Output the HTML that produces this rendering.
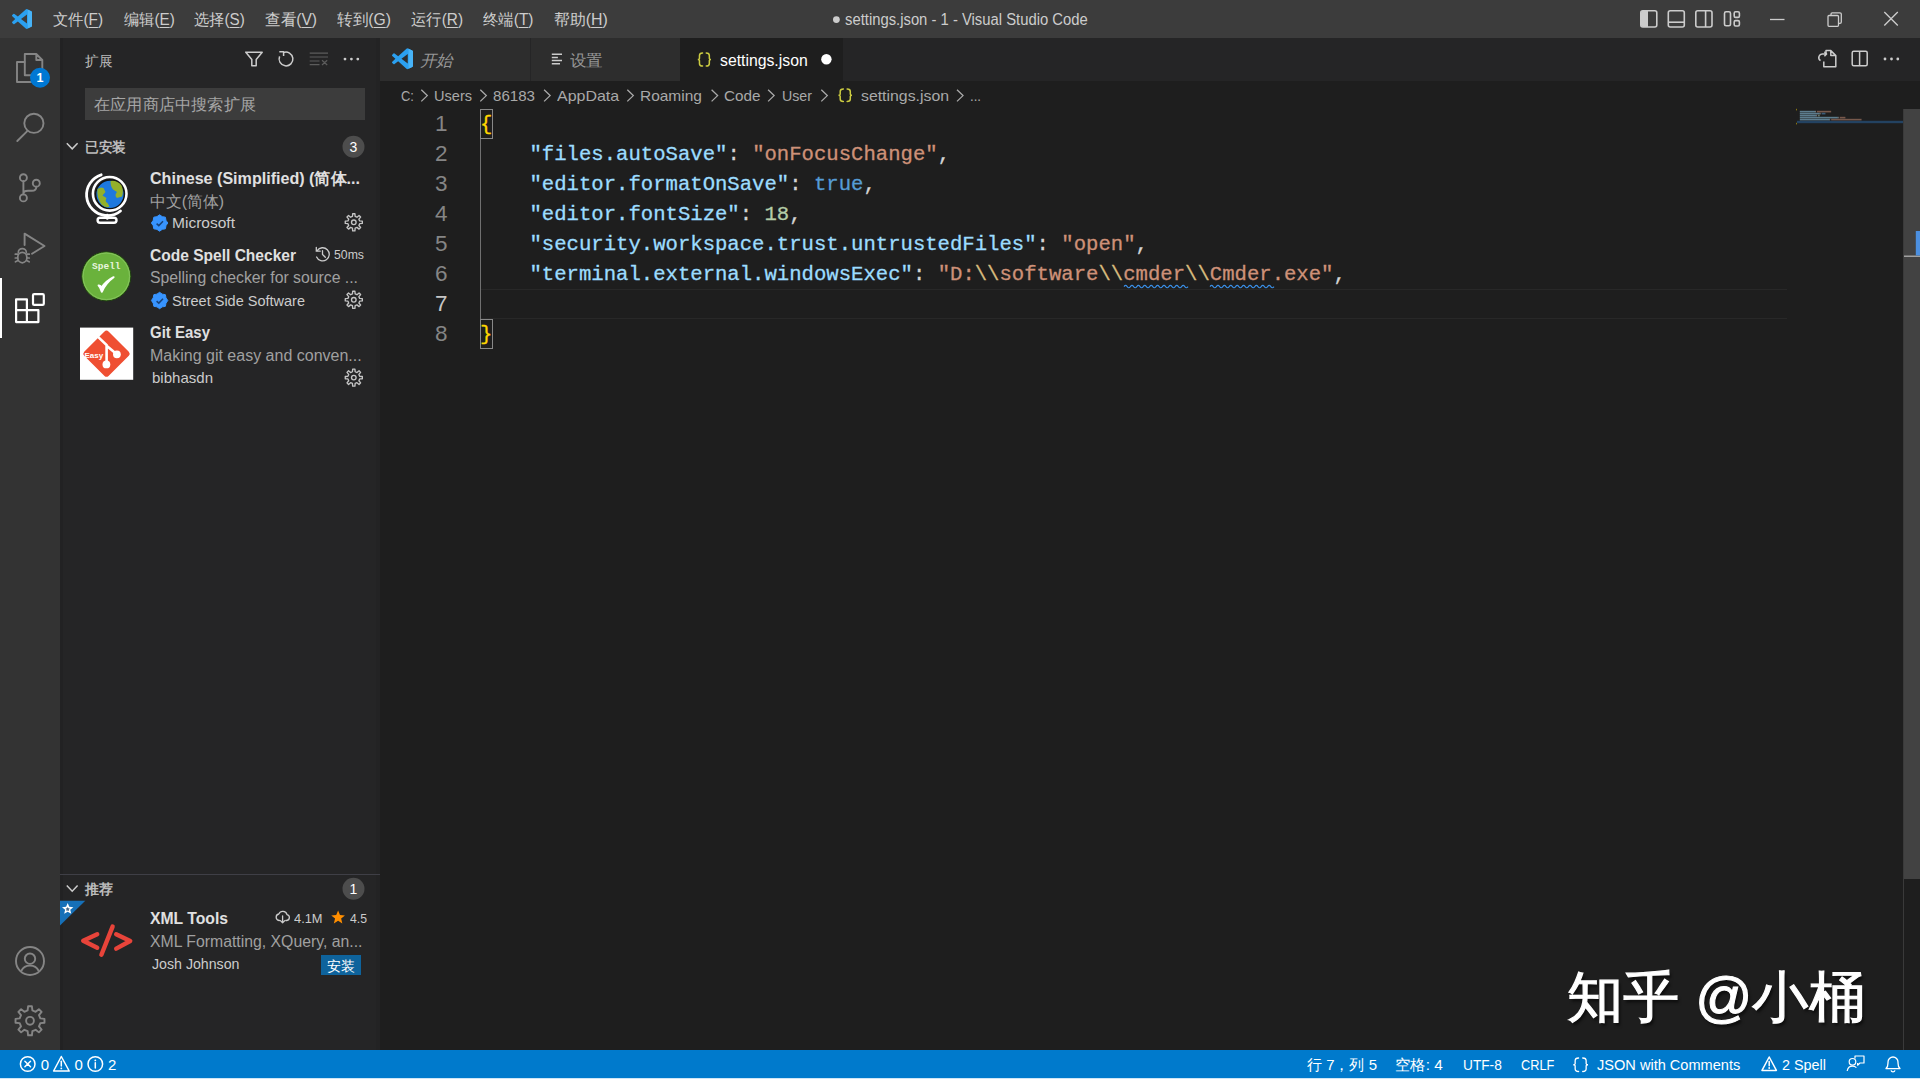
<!DOCTYPE html>
<html><head><meta charset="utf-8">
<style>
*{margin:0;padding:0;box-sizing:border-box}
html,body{width:1920px;height:1079px;overflow:hidden;background:#1e1e1e;font-family:"Liberation Sans",sans-serif;color:#ccc;position:relative}
.a{position:absolute;white-space:pre}
.f{transform-origin:0 0}
u{text-decoration:underline;text-underline-offset:2px;text-decoration-thickness:1px}
.code{font-family:"Liberation Mono",monospace;font-size:20.625px;line-height:20.625px;color:#d4d4d4;-webkit-text-stroke:0.3px}
svg.ic{position:absolute;left:0;top:0;width:1920px;height:1079px}
</style></head><body>
<div class="a" style="left:0px;top:0px;width:1920px;height:38px;background:#3c3c3c;"></div>
<div class="a" style="left:0px;top:38px;width:60px;height:1012px;background:#333333;"></div>
<div class="a" style="left:60px;top:38px;width:320px;height:1012px;background:#252526;"></div>
<div class="a" style="left:60px;top:38px;width:3px;height:1012px;background:#222223;"></div>
<div class="a" style="left:376px;top:38px;width:4px;height:1012px;background:#232324;"></div>
<div class="a" style="left:380px;top:38px;width:1540px;height:43px;background:#252526;"></div>
<div class="a" style="left:380px;top:38px;width:150px;height:43px;background:#2d2d2d;"></div>
<div class="a" style="left:531px;top:38px;width:149px;height:43px;background:#2d2d2d;"></div>
<div class="a" style="left:680px;top:38px;width:163px;height:43px;background:#1e1e1e;"></div>
<div class="a" style="left:380px;top:81px;width:1540px;height:969px;background:#1e1e1e;"></div>
<div class="a" style="left:0px;top:1050px;width:1920px;height:28px;background:#007acc;"></div>
<div class="a" style="left:0px;top:1078px;width:1920px;height:1px;background:#cfe6f6;"></div>
<div class="a f" style="transform:scaleX(0.9535);left:53px;top:12.46px;font-size:16px;line-height:16px;color:#cccccc;font-weight:400;">文件(<u>F</u>)</div>
<div class="a f" style="transform:scaleX(0.9526);left:123.6px;top:12.46px;font-size:16px;line-height:16px;color:#cccccc;font-weight:400;">编辑(<u>E</u>)</div>
<div class="a f" style="transform:scaleX(0.9507);left:194px;top:12.46px;font-size:16px;line-height:16px;color:#cccccc;font-weight:400;">选择(<u>S</u>)</div>
<div class="a f" style="transform:scaleX(0.9751);left:265px;top:12.46px;font-size:16px;line-height:16px;color:#cccccc;font-weight:400;">查看(<u>V</u>)</div>
<div class="a f" style="transform:scaleX(0.9799);left:337px;top:12.46px;font-size:16px;line-height:16px;color:#cccccc;font-weight:400;">转到(<u>G</u>)</div>
<div class="a f" style="transform:scaleX(0.9591);left:411px;top:12.46px;font-size:16px;line-height:16px;color:#cccccc;font-weight:400;">运行(<u>R</u>)</div>
<div class="a f" style="transform:scaleX(0.9631);left:482.5px;top:12.46px;font-size:16px;line-height:16px;color:#cccccc;font-weight:400;">终端(<u>T</u>)</div>
<div class="a f" style="transform:scaleX(0.9941);left:553.6px;top:12.46px;font-size:16px;line-height:16px;color:#cccccc;font-weight:400;">帮助(<u>H</u>)</div>
<div class="a f" style="transform:scaleX(0.9261);left:844.8px;top:12.46px;font-size:16px;line-height:16px;color:#cccccc;font-weight:400;">settings.json - 1 - Visual Studio Code</div>
<div class="a f" style="transform:scaleX(0.9821);left:85px;top:53.65px;font-size:14px;line-height:14px;color:#bbbbbb;font-weight:400;">扩展</div>
<div class="a" style="left:85px;top:88px;width:280px;height:32px;background:#3c3c3c;"></div>
<div class="a f" style="transform:scaleX(1.0125);left:94px;top:97.46px;font-size:16px;line-height:16px;color:#a6a6a6;font-weight:400;">在应用商店中搜索扩展</div>
<div class="a f" style="transform:scaleX(0.9762);left:85px;top:139.65px;font-size:14px;line-height:14px;color:#bbbbbb;font-weight:700;">已安装</div>
<div class="a f" style="transform:scaleX(1.0052);left:150px;top:170.96px;font-size:16px;line-height:16px;color:#e0e0e0;font-weight:700;">Chinese (Simplified) (简体...</div>
<div class="a f" style="transform:scaleX(0.9912);left:150px;top:193.96px;font-size:16px;line-height:16px;color:#a0a0a0;font-weight:400;">中文(简体)</div>
<div class="a f" style="transform:scaleX(1.0354);left:172px;top:215.10px;font-size:15px;line-height:15px;color:#cccccc;font-weight:400;">Microsoft</div>
<div class="a f" style="transform:scaleX(0.9715);left:150px;top:247.96px;font-size:16px;line-height:16px;color:#e0e0e0;font-weight:700;">Code Spell Checker</div>
<div class="a f" style="transform:scaleX(0.9435);left:333.5px;top:248.20px;font-size:13px;line-height:13px;color:#cccccc;font-weight:400;">50ms</div>
<div class="a f" style="transform:scaleX(0.9869);left:150px;top:270.46px;font-size:16px;line-height:16px;color:#a0a0a0;font-weight:400;">Spelling checker for source ...</div>
<div class="a f" style="transform:scaleX(0.9667);left:172px;top:293.30px;font-size:15px;line-height:15px;color:#cccccc;font-weight:400;">Street Side Software</div>
<div class="a f" style="transform:scaleX(0.9370);left:150px;top:325.46px;font-size:16px;line-height:16px;color:#e0e0e0;font-weight:700;">Git Easy</div>
<div class="a f" style="transform:scaleX(1.0001);left:150px;top:347.96px;font-size:16px;line-height:16px;color:#a0a0a0;font-weight:400;">Making git easy and conven...</div>
<div class="a f" style="transform:scaleX(1.0018);left:151.5px;top:370.30px;font-size:15px;line-height:15px;color:#cccccc;font-weight:400;">bibhasdn</div>
<div class="a" style="left:60px;top:874px;width:320px;height:1px;background:#3f3f46;"></div>
<div class="a f" style="transform:scaleX(1.0000);left:85px;top:881.65px;font-size:14px;line-height:14px;color:#bbbbbb;font-weight:700;">推荐</div>
<div class="a f" style="transform:scaleX(0.9823);left:150px;top:911.46px;font-size:16px;line-height:16px;color:#e0e0e0;font-weight:700;">XML Tools</div>
<div class="a f" style="transform:scaleX(0.9859);left:294px;top:911.70px;font-size:13px;line-height:13px;color:#cccccc;font-weight:400;">4.1M</div>
<div class="a f" style="transform:scaleX(0.9404);left:349.5px;top:911.70px;font-size:13px;line-height:13px;color:#cccccc;font-weight:400;">4.5</div>
<div class="a f" style="transform:scaleX(0.9875);left:150px;top:933.96px;font-size:16px;line-height:16px;color:#a0a0a0;font-weight:400;">XML Formatting, XQuery, an...</div>
<div class="a f" style="transform:scaleX(0.9451);left:151.5px;top:956.30px;font-size:15px;line-height:15px;color:#cccccc;font-weight:400;">Josh Johnson</div>
<div class="a" style="left:321px;top:955px;width:40px;height:20px;background:#0e639c;"></div>
<div class="a f" style="transform:scaleX(1.0000);left:327px;top:959.15px;font-size:14px;line-height:14px;color:#ffffff;font-weight:400;">安装</div>
<div class="a f" style="transform:scaleX(1.0312);left:420px;top:52.96px;font-size:16px;line-height:16px;color:#969696;font-weight:400;font-style:italic;">开始</div>
<div class="a f" style="transform:scaleX(1.0312);left:570px;top:52.96px;font-size:16px;line-height:16px;color:#969696;font-weight:400;">设置</div>
<div class="a f" style="transform:scaleX(0.9861);left:720.3px;top:52.96px;font-size:16px;line-height:16px;color:#ffffff;font-weight:400;">settings.json</div>
<div class="a f" style="transform:scaleX(0.8600);left:400.5px;top:87.90px;font-size:15px;line-height:15px;color:#a9a9a9;font-weight:400;">C:</div>
<div class="a f" style="transform:scaleX(0.9701);left:434.4px;top:87.90px;font-size:15px;line-height:15px;color:#a9a9a9;font-weight:400;">Users</div>
<div class="a f" style="transform:scaleX(1.0067);left:493.4px;top:87.90px;font-size:15px;line-height:15px;color:#a9a9a9;font-weight:400;">86183</div>
<div class="a f" style="transform:scaleX(1.0655);left:557.2px;top:87.90px;font-size:15px;line-height:15px;color:#a9a9a9;font-weight:400;">AppData</div>
<div class="a f" style="transform:scaleX(1.0311);left:640.4px;top:87.90px;font-size:15px;line-height:15px;color:#a9a9a9;font-weight:400;">Roaming</div>
<div class="a f" style="transform:scaleX(1.0179);left:723.9px;top:87.90px;font-size:15px;line-height:15px;color:#a9a9a9;font-weight:400;">Code</div>
<div class="a f" style="transform:scaleX(0.9472);left:782px;top:87.90px;font-size:15px;line-height:15px;color:#a9a9a9;font-weight:400;">User</div>
<div class="a f" style="transform:scaleX(1.0553);left:861px;top:87.90px;font-size:15px;line-height:15px;color:#a9a9a9;font-weight:400;">settings.json</div>
<div class="a f" style="transform:scaleX(0.8789);left:970px;top:87.90px;font-size:15px;line-height:15px;color:#a9a9a9;font-weight:400;">...</div>
<div class="a" style="left:480px;top:289px;width:1307px;height:1px;background:#282828;"></div>
<div class="a" style="left:480px;top:318px;width:1307px;height:1px;background:#282828;"></div>
<div class="a code" style="left:480px;top:114.90px"><span style="color:#ffd700">{</span></div>
<div class="a" style="left:435px;top:113.46px;font-size:22.5px;line-height:22.5px;color:#858585;font-weight:400;font-family:"Liberation Mono",monospace;width:13px;text-align:right;">1</div>
<div class="a code" style="left:480px;top:144.90px">    <span style="color:#9cdcfe">"files.autoSave"</span><span style="color:#d4d4d4">: </span><span style="color:#ce9178">"onFocusChange"</span><span style="color:#d4d4d4">,</span></div>
<div class="a" style="left:435px;top:143.46px;font-size:22.5px;line-height:22.5px;color:#858585;font-weight:400;font-family:"Liberation Mono",monospace;width:13px;text-align:right;">2</div>
<div class="a code" style="left:480px;top:174.90px">    <span style="color:#9cdcfe">"editor.formatOnSave"</span><span style="color:#d4d4d4">: </span><span style="color:#569cd6">true</span><span style="color:#d4d4d4">,</span></div>
<div class="a" style="left:435px;top:173.46px;font-size:22.5px;line-height:22.5px;color:#858585;font-weight:400;font-family:"Liberation Mono",monospace;width:13px;text-align:right;">3</div>
<div class="a code" style="left:480px;top:204.90px">    <span style="color:#9cdcfe">"editor.fontSize"</span><span style="color:#d4d4d4">: </span><span style="color:#b5cea8">18</span><span style="color:#d4d4d4">,</span></div>
<div class="a" style="left:435px;top:203.46px;font-size:22.5px;line-height:22.5px;color:#858585;font-weight:400;font-family:"Liberation Mono",monospace;width:13px;text-align:right;">4</div>
<div class="a code" style="left:480px;top:234.90px">    <span style="color:#9cdcfe">"security.workspace.trust.untrustedFiles"</span><span style="color:#d4d4d4">: </span><span style="color:#ce9178">"open"</span><span style="color:#d4d4d4">,</span></div>
<div class="a" style="left:435px;top:233.46px;font-size:22.5px;line-height:22.5px;color:#858585;font-weight:400;font-family:"Liberation Mono",monospace;width:13px;text-align:right;">5</div>
<div class="a code" style="left:480px;top:264.90px">    <span style="color:#9cdcfe">"terminal.external.windowsExec"</span><span style="color:#d4d4d4">: </span><span style="color:#ce9178">"D:</span><span style="color:#d7ba7d">\\</span><span style="color:#ce9178">software</span><span style="color:#d7ba7d">\\</span><span style="color:#ce9178">cmder</span><span style="color:#d7ba7d">\\</span><span style="color:#ce9178">Cmder.exe"</span><span style="color:#d4d4d4">,</span></div>
<div class="a" style="left:435px;top:263.46px;font-size:22.5px;line-height:22.5px;color:#858585;font-weight:400;font-family:"Liberation Mono",monospace;width:13px;text-align:right;">6</div>
<div class="a code" style="left:480px;top:294.90px"></div>
<div class="a" style="left:435px;top:293.46px;font-size:22.5px;line-height:22.5px;color:#c6c6c6;font-weight:400;font-family:"Liberation Mono",monospace;width:13px;text-align:right;">7</div>
<div class="a code" style="left:480px;top:324.90px"><span style="color:#ffd700">}</span></div>
<div class="a" style="left:435px;top:323.46px;font-size:22.5px;line-height:22.5px;color:#858585;font-weight:400;font-family:"Liberation Mono",monospace;width:13px;text-align:right;">8</div>
<div class="a" style="left:40.8px;top:1057.10px;font-size:15px;line-height:15px;color:#ffffff;font-weight:400;">0</div>
<div class="a" style="left:74.6px;top:1057.10px;font-size:15px;line-height:15px;color:#ffffff;font-weight:400;">0</div>
<div class="a" style="left:108px;top:1057.10px;font-size:15px;line-height:15px;color:#ffffff;font-weight:400;">2</div>
<div class="a f" style="transform:scaleX(0.9996);left:1306.7px;top:1057.10px;font-size:15px;line-height:15px;color:#ffffff;font-weight:400;">行 7，列 5</div>
<div class="a f" style="transform:scaleX(1.0217);left:1395px;top:1057.10px;font-size:15px;line-height:15px;color:#ffffff;font-weight:400;">空格: 4</div>
<div class="a f" style="transform:scaleX(0.9129);left:1462.9px;top:1057.10px;font-size:15px;line-height:15px;color:#ffffff;font-weight:400;">UTF-8</div>
<div class="a f" style="transform:scaleX(0.8501);left:1520.7px;top:1057.10px;font-size:15px;line-height:15px;color:#ffffff;font-weight:400;">CRLF</div>
<div class="a f" style="transform:scaleX(0.9712);left:1596.7px;top:1057.10px;font-size:15px;line-height:15px;color:#ffffff;font-weight:400;">JSON with Comments</div>
<div class="a f" style="transform:scaleX(0.9591);left:1781.7px;top:1057.10px;font-size:15px;line-height:15px;color:#ffffff;font-weight:400;">2 Spell</div>
<div class="a f" style="transform:scaleX(1.0236);left:1567px;top:970.44px;font-size:55px;line-height:55px;color:#ffffff;font-weight:500;text-shadow:2px 3px 3px rgba(0,0,0,.6);-webkit-text-stroke:1.1px #fff;">知乎 @小桶</div>
<svg class="ic" viewBox="0 0 1920 1079">
<g transform="translate(12,9) scale(0.2)"><path d="M96.46 10.8L75.86.87a6.23 6.23 0 0 0-7.1 1.2L29.35 38.04 12.17 25a4.16 4.16 0 0 0-5.32.24L1.34 30.25a4.17 4.17 0 0 0 0 6.15L16.24 50 1.34 63.6a4.17 4.17 0 0 0 0 6.15l5.51 5.01a4.16 4.16 0 0 0 5.32.24l17.18-13.04 39.41 35.96a6.22 6.22 0 0 0 7.1 1.2l20.6-9.91A6.25 6.25 0 0 0 100 83.6V16.4a6.25 6.25 0 0 0-3.54-5.6zM75.01 72.7L45.11 50l29.9-22.7v45.4z" fill="#2ba0f0"/><path d="M75.86.87 L96.46 10.8 A6.25 6.25 0 0 1 100 16.4 V83.6 A6.25 6.25 0 0 1 96.46 89.2 L75.86 99.13 A6.2 6.2 0 0 0 79 94 V6 A6.2 6.2 0 0 0 75.86.87Z" fill="#47b3f7"/></g>
<circle cx="836.4" cy="19.6" r="3.4" fill="#cccccc"/>
<g fill="none" stroke="#cccccc" stroke-width="1.6" stroke-linejoin="round">
<rect x="1640.8" y="10.8" width="16" height="16.2" rx="2"/>
<rect x="1668.3" y="10.8" width="16" height="16.2" rx="2"/><line x1="1668.3" y1="22.2" x2="1684.3" y2="22.2"/>
<rect x="1695.8" y="10.8" width="16.2" height="16.2" rx="2"/><line x1="1705.6" y1="10.8" x2="1705.6" y2="27"/>
<rect x="1724.5" y="11.8" width="6" height="14" rx="1.6"/><rect x="1734.2" y="11.8" width="5.2" height="5.6" rx="1.4"/><rect x="1734.2" y="20.6" width="5.2" height="5.4" rx="1.4"/>
</g>
<path d="M1641 12.8 Q1641 10.8 1643 10.8 H1648 V27 H1643 Q1641 27 1641 25Z" fill="#cccccc"/>
<g fill="none" stroke="#cccccc" stroke-width="1.3">
<line x1="1770" y1="19.5" x2="1784.5" y2="19.5"/>
<rect x="1828" y="15.5" width="10.5" height="10.8" rx="1"/><path d="M1831 15.5 V14 Q1831 12.8 1832.2 12.8 H1840 Q1841.3 12.8 1841.3 14 V22 Q1841.3 23.3 1840 23.3 H1838.5"/>
<path d="M1884.3 12 L1897.8 25.5 M1897.8 12 L1884.3 25.5"/>
</g>
<g fill="none" stroke="#858585" stroke-width="1.9" stroke-linejoin="round" stroke-linecap="round">
<path d="M24.5 62 H17 V82 H31"/>
<path d="M24.8 54 H36.3 L42.3 60 V75.2 H24.8 Z M36.3 54 V60 H42.3"/>
<circle cx="33.9" cy="123.3" r="9.6"/><line x1="17.3" y1="141" x2="27" y2="131.3"/>
<circle cx="23.4" cy="177.7" r="3.5"/><circle cx="23.4" cy="197.9" r="3.5"/><circle cx="36.3" cy="183.2" r="3.5"/>
<path d="M23.4 181.2 V194.4 M36.3 186.7 Q36.3 190.8 31.8 190.8 H28 Q23.4 190.8 23.4 194"/>
<path d="M24.6 245 V233.6 L44.5 246 L32 253.8"/>
</g>
<g fill="none" stroke="#858585" stroke-width="1.7" stroke-linecap="round">
<path d="M18.3 252.2 A4 3.6 0 0 1 26.3 252.2"/><ellipse cx="22.3" cy="257.6" rx="4.6" ry="5.2"/>
<path d="M15.3 254.2 H17.8 M15.3 258 H17.7 M15.5 261.8 L18 260.6 M29.3 254.2 H26.8 M29.3 258 H26.9 M29.1 261.8 L26.6 260.6"/>
</g>
<g fill="none" stroke="#ffffff" stroke-width="2.2" stroke-linejoin="round">
<rect x="33" y="294.1" width="10.8" height="10.8" rx="1.2"/>
<path d="M16.1 299.3 H26.9 V310.2 H38.4 V322.1 H16.1 Z M16.1 310.2 H26.9 V322.1"/>
</g>
<rect x="0" y="278" width="2" height="60" fill="#ffffff"/>
<circle cx="40" cy="77.8" r="10" fill="#0078d4"/>
<text x="40" y="82.3" font-family="Liberation Sans" font-size="12.5" font-weight="700" fill="#fff" text-anchor="middle">1</text>
<g fill="none" stroke="#858585" stroke-width="1.9">
<circle cx="30" cy="961" r="14"/><circle cx="30" cy="958.7" r="5.2"/><path d="M21.2 971 A9.8 9.8 0 0 1 38.8 971"/>
</g>
<path d="M40.33,1018.42 L44.48,1018.89 L44.48,1022.71 L40.33,1023.18 L38.99,1026.42 L41.58,1029.69 L38.89,1032.38 L35.62,1029.79 L32.38,1031.13 L31.91,1035.28 L28.09,1035.28 L27.62,1031.13 L24.38,1029.79 L21.11,1032.38 L18.42,1029.69 L21.01,1026.42 L19.67,1023.18 L15.52,1022.71 L15.52,1018.89 L19.67,1018.42 L21.01,1015.18 L18.42,1011.91 L21.11,1009.22 L24.38,1011.81 L27.62,1010.47 L28.09,1006.32 L31.91,1006.32 L32.38,1010.47 L35.62,1011.81 L38.89,1009.22 L41.58,1011.91 L38.99,1015.18Z" fill="none" stroke="#858585" stroke-width="1.9" stroke-linejoin="round"/>
<circle cx="30" cy="1020.8" r="3.9" fill="none" stroke="#858585" stroke-width="1.9"/>
<g fill="none" stroke="#cccccc" stroke-width="1.5" stroke-linejoin="round">
<path d="M245.8 52.2 H262.2 L256.2 59.5 V65.8 H251.8 V59.5 Z"/>
<path d="M283.4 52.6 A6.9 6.9 0 1 1 279.6 56.4"/><path d="M279.3 51.8 H283.6 V56"/>
</g>
<g fill="none" stroke="#5c5c5c" stroke-width="1.2">
<path d="M309.7 53.1 H328 M309.7 57 H328 M309.7 61 H319.5 M309.7 64.6 H319.5 M322 60.2 L327.2 65 M327.2 60.2 L322 65"/>
</g>
<circle cx="345" cy="59.1" r="1.4" fill="#cccccc"/>
<circle cx="351.4" cy="59.1" r="1.4" fill="#cccccc"/>
<circle cx="357.8" cy="59.1" r="1.4" fill="#cccccc"/>
<g fill="none" stroke="#cccccc" stroke-width="1.5"><path d="M66.8 143.2 L72.2 148.8 L77.6 143.2"/><path d="M66.8 885.6 L72.2 891.2 L77.6 885.6"/></g>
<circle cx="353.5" cy="146.7" r="11" fill="#4d4d4d"/><text x="353.5" y="151.6" font-family="Liberation Sans" font-size="14" fill="#fff" text-anchor="middle">3</text>
<circle cx="353.5" cy="888.7" r="11" fill="#4d4d4d"/><text x="353.5" y="893.6" font-family="Liberation Sans" font-size="14" fill="#fff" text-anchor="middle">1</text>
<circle cx="110" cy="194.3" r="14.3" fill="#1d78de" stroke="#101010" stroke-width="1.4"/>
<path d="M110.5 181 Q117 180 121.5 185.5 Q124 191 122 196.5 L117 198 Q114 195.5 117 192 L113 189.5 Q110.5 186.5 110.5 181Z" fill="#93b02a"/>
<path d="M97.5 189 Q100.5 186.5 103.5 188 L105.5 192 L102.5 195.5 L106.5 198 Q104.5 201.5 107.5 203 L109.5 206.5 Q106 208.5 101.5 204.5 Q96.5 198 97.5 189Z" fill="#93b02a"/>
<g fill="none" stroke="#ffffff" stroke-linecap="round">
<circle cx="109.7" cy="193.8" r="16.8" stroke-width="2.6"/>
<path d="M101.2 174.8 A20.9 20.9 0 0 0 105 215.5 Q114 216.5 120.5 211" stroke-width="2.8"/>
<line x1="107.3" y1="215" x2="107.3" y2="218.5" stroke-width="2.6"/>
<rect x="97.6" y="217.8" width="18.9" height="5" rx="2.5" stroke-width="2.4"/>
</g>
<circle cx="106.3" cy="276.3" r="24.6" fill="#6ab23c" stroke="#1f3d12" stroke-width="1"/>
<circle cx="106.3" cy="276.3" r="23.2" fill="none" stroke="#86c45e" stroke-width="1"/>
<text x="106.3" y="269" font-family="Liberation Mono" font-size="9.5" font-weight="700" fill="#e8f5dc" text-anchor="middle">Spell</text>
<path d="M98.6 285.5 Q100.4 287 101.8 291.8 Q105.5 283 113.6 277.2 Q106 281 101.6 287.6 Q100.4 285.2 98.6 285.5Z" fill="#fff" stroke="#fff" stroke-width="2" stroke-linejoin="round"/>
<rect x="80" y="327.6" width="53.2" height="52.2" fill="#ffffff"/>
<path d="M106.5 330.6 Q107.6 330.6 108.5 331.5 L128.8 351.7 Q130.6 353.7 128.8 355.7 L108.5 375.9 Q106.5 377.8 104.5 375.9 L84.2 355.7 Q82.4 353.7 84.2 351.7 L104.5 331.5 Q105.4 330.6 106.5 330.6Z" fill="#ef4f32"/>
<g stroke="#ffffff" stroke-width="2.6" fill="none"><path d="M97.8 336.6 L106.6 345 V362 M106.6 345.8 L116.8 354.3"/></g>
<circle cx="106.4" cy="364.4" r="3.9" fill="#fff"/><circle cx="116.9" cy="354.3" r="3.9" fill="#fff"/>
<text x="93.8" y="357.6" font-family="Liberation Sans" font-size="8" font-weight="700" fill="#fff" text-anchor="middle">Easy</text>
<path d="M60 900.8 H85.3 L60 925.5Z" fill="#1670b8"/>
<polygon points="67.70,903.00 69.29,906.82 73.41,907.15 70.27,909.83 71.23,913.85 67.70,911.70 64.17,913.85 65.13,909.83 61.99,907.15 66.11,906.82" fill="#ffffff"/>
<polygon points="67.70,907.10 68.41,908.33 69.79,908.62 68.84,909.67 68.99,911.08 67.70,910.50 66.41,911.08 66.56,909.67 65.61,908.62 66.99,908.33" fill="#4a6a8a"/>
<g fill="none" stroke="#e8443a" stroke-width="4.4" stroke-linecap="round" stroke-linejoin="round">
<path d="M97.2 934.2 L83.2 940.8 L97.2 947.8"/><path d="M112.6 926.6 L101.4 954.8"/><path d="M116.2 934.2 L130.2 941 L116.2 948.6"/>
</g>
<polygon points="167.80,223.00 165.97,225.64 165.40,228.80 162.24,229.37 159.60,231.20 156.96,229.37 153.80,228.80 153.23,225.64 151.40,223.00 153.23,220.36 153.80,217.20 156.96,216.63 159.60,214.80 162.24,216.63 165.40,217.20 165.97,220.36" fill="#3794ff" stroke="#3794ff" stroke-width="1" stroke-linejoin="round"/>
<path d="M156.6 223.6 L158.79999999999998 225.6 L163.0 221.2" fill="none" stroke="#17427a" stroke-width="1.5"/>
<polygon points="167.80,300.50 165.97,303.14 165.40,306.30 162.24,306.87 159.60,308.70 156.96,306.87 153.80,306.30 153.23,303.14 151.40,300.50 153.23,297.86 153.80,294.70 156.96,294.13 159.60,292.30 162.24,294.13 165.40,294.70 165.97,297.86" fill="#3794ff" stroke="#3794ff" stroke-width="1" stroke-linejoin="round"/>
<path d="M156.6 301.1 L158.79999999999998 303.1 L163.0 298.7" fill="none" stroke="#17427a" stroke-width="1.5"/>
<path d="M359.65,220.95 L362.33,221.18 L362.33,223.42 L359.65,223.65 L358.89,225.48 L360.62,227.54 L359.04,229.12 L356.98,227.39 L355.15,228.15 L354.92,230.83 L352.68,230.83 L352.45,228.15 L350.62,227.39 L348.56,229.12 L346.98,227.54 L348.71,225.48 L347.95,223.65 L345.27,223.42 L345.27,221.18 L347.95,220.95 L348.71,219.12 L346.98,217.06 L348.56,215.48 L350.62,217.21 L352.45,216.45 L352.68,213.77 L354.92,213.77 L355.15,216.45 L356.98,217.21 L359.04,215.48 L360.62,217.06 L358.89,219.12Z" fill="none" stroke="#c5c5c5" stroke-width="1.35" stroke-linejoin="round"/>
<circle cx="353.8" cy="222.3" r="2.3" fill="none" stroke="#c5c5c5" stroke-width="1.35"/>
<path d="M359.65,298.45 L362.33,298.68 L362.33,300.92 L359.65,301.15 L358.89,302.98 L360.62,305.04 L359.04,306.62 L356.98,304.89 L355.15,305.65 L354.92,308.33 L352.68,308.33 L352.45,305.65 L350.62,304.89 L348.56,306.62 L346.98,305.04 L348.71,302.98 L347.95,301.15 L345.27,300.92 L345.27,298.68 L347.95,298.45 L348.71,296.62 L346.98,294.56 L348.56,292.98 L350.62,294.71 L352.45,293.95 L352.68,291.27 L354.92,291.27 L355.15,293.95 L356.98,294.71 L359.04,292.98 L360.62,294.56 L358.89,296.62Z" fill="none" stroke="#c5c5c5" stroke-width="1.35" stroke-linejoin="round"/>
<circle cx="353.8" cy="299.8" r="2.3" fill="none" stroke="#c5c5c5" stroke-width="1.35"/>
<path d="M359.65,376.25 L362.33,376.48 L362.33,378.72 L359.65,378.95 L358.89,380.78 L360.62,382.84 L359.04,384.42 L356.98,382.69 L355.15,383.45 L354.92,386.13 L352.68,386.13 L352.45,383.45 L350.62,382.69 L348.56,384.42 L346.98,382.84 L348.71,380.78 L347.95,378.95 L345.27,378.72 L345.27,376.48 L347.95,376.25 L348.71,374.42 L346.98,372.36 L348.56,370.78 L350.62,372.51 L352.45,371.75 L352.68,369.07 L354.92,369.07 L355.15,371.75 L356.98,372.51 L359.04,370.78 L360.62,372.36 L358.89,374.42Z" fill="none" stroke="#c5c5c5" stroke-width="1.35" stroke-linejoin="round"/>
<circle cx="353.8" cy="377.6" r="2.3" fill="none" stroke="#c5c5c5" stroke-width="1.35"/>
<g fill="none" stroke="#cccccc" stroke-width="1.3" stroke-linecap="round"><path d="M317.2 250.6 A6.6 6.6 0 1 1 316.6 257"/><path d="M316.3 247.3 V251.2 H320.2"/><path d="M322.5 250.6 V254.4 L325.3 257.2"/></g>
<g fill="none" stroke="#cccccc" stroke-width="1.3" stroke-linecap="round" stroke-linejoin="round"><path d="M279.5 920.5 H279 A3.3 3.3 0 0 1 278.8 914 A4.4 4.4 0 0 1 287 914.6 A3 3 0 0 1 286.8 920.5 H285.8"/><path d="M282.6 915.8 V922.8 M280.4 920.6 L282.6 922.8 L284.8 920.6"/></g>
<polygon points="338.10,910.40 339.98,915.01 344.95,915.38 341.14,918.59 342.33,923.42 338.10,920.80 333.87,923.42 335.06,918.59 331.25,915.38 336.22,915.01" fill="#ff8e00"/>
<g transform="translate(392,48.3) scale(0.21)"><path d="M96.46 10.8L75.86.87a6.23 6.23 0 0 0-7.1 1.2L29.35 38.04 12.17 25a4.16 4.16 0 0 0-5.32.24L1.34 30.25a4.17 4.17 0 0 0 0 6.15L16.24 50 1.34 63.6a4.17 4.17 0 0 0 0 6.15l5.51 5.01a4.16 4.16 0 0 0 5.32.24l17.18-13.04 39.41 35.96a6.22 6.22 0 0 0 7.1 1.2l20.6-9.91A6.25 6.25 0 0 0 100 83.6V16.4a6.25 6.25 0 0 0-3.54-5.6zM75.01 72.7L45.11 50l29.9-22.7v45.4z" fill="#2ba0f0"/><path d="M75.86.87 L96.46 10.8 A6.25 6.25 0 0 1 100 16.4 V83.6 A6.25 6.25 0 0 1 96.46 89.2 L75.86 99.13 A6.2 6.2 0 0 0 79 94 V6 A6.2 6.2 0 0 0 75.86.87Z" fill="#47b3f7"/></g>
<g stroke="#cccccc" stroke-width="1.5"><path d="M551.8 54.2 H562 M551.8 57.4 H557.9 M551.8 60.6 H562 M551.8 63.8 H560"/></g>
<path d="M702.5519999999999 53 Q699.4631999999999 53 699.4631999999999 55.6 V58.46 Q699.4631999999999 59.5 697.8 59.5 Q699.4631999999999 59.5 699.4631999999999 60.54 V63.4 Q699.4631999999999 66 702.5519999999999 66 M706.248 53 Q709.3368 53 709.3368 55.6 V58.46 Q709.3368 59.5 711.0 59.5 Q709.3368 59.5 709.3368 60.54 V63.4 Q709.3368 66 706.248 66" fill="none" stroke="#cbcb41" stroke-width="1.5" stroke-linecap="round"/>
<circle cx="826.4" cy="59.2" r="5.2" fill="#ffffff"/>
<g fill="none" stroke="#a9a9a9" stroke-width="1.3">
<path d="M421.3 89.8 L427.3 95.6 L421.3 101.4"/>
<path d="M480.3 89.8 L486.3 95.6 L480.3 101.4"/>
<path d="M544.1 89.8 L550.1 95.6 L544.1 101.4"/>
<path d="M627.3000000000001 89.8 L633.3000000000001 95.6 L627.3000000000001 101.4"/>
<path d="M711.6 89.8 L717.6 95.6 L711.6 101.4"/>
<path d="M768.1 89.8 L774.1 95.6 L768.1 101.4"/>
<path d="M821.3000000000001 89.8 L827.3000000000001 95.6 L821.3000000000001 101.4"/>
<path d="M957.0 89.8 L963.0 95.6 L957.0 101.4"/>
</g>
<path d="M843.36 89 Q840.201 89 840.201 91.5 V94.25 Q840.201 95.25 838.5 95.25 Q840.201 95.25 840.201 96.25 V99.0 Q840.201 101.5 843.36 101.5 M847.14 89 Q850.299 89 850.299 91.5 V94.25 Q850.299 95.25 852.0 95.25 Q850.299 95.25 850.299 96.25 V99.0 Q850.299 101.5 847.14 101.5" fill="none" stroke="#cbcb41" stroke-width="1.5" stroke-linecap="round"/>
<rect x="480.5" y="109.5" width="12" height="29" fill="none" stroke="#888888" stroke-width="1"/>
<rect x="480.5" y="319.5" width="12" height="29" fill="none" stroke="#888888" stroke-width="1"/>
<line x1="480.5" y1="139" x2="480.5" y2="319" stroke="#707070" stroke-width="1"/>
<path d="M1124 286.6 Q1125.6 284.20000000000005 1127.2 286.6 Q1128.8 289.0 1130.4 286.6 Q1132.0 284.20000000000005 1133.6000000000001 286.6 Q1135.2 289.0 1136.8000000000002 286.6 Q1138.4 284.20000000000005 1140.0000000000002 286.6 Q1141.6000000000001 289.0 1143.2000000000003 286.6 Q1144.8000000000002 284.20000000000005 1146.4000000000003 286.6 Q1148.0000000000002 289.0 1149.6000000000004 286.6 Q1151.2000000000003 284.20000000000005 1152.8000000000004 286.6 Q1154.4000000000003 289.0 1156.0000000000005 286.6 Q1157.6000000000004 284.20000000000005 1159.2000000000005 286.6 Q1160.8000000000004 289.0 1162.4000000000005 286.6 Q1164.0000000000005 284.20000000000005 1165.6000000000006 286.6 Q1167.2000000000005 289.0 1168.8000000000006 286.6 Q1170.4000000000005 284.20000000000005 1172.0000000000007 286.6 Q1173.6000000000006 289.0 1175.2000000000007 286.6 Q1176.8000000000006 284.20000000000005 1178.4000000000008 286.6 Q1180.0000000000007 289.0 1181.6000000000008 286.6 Q1183.2000000000007 284.20000000000005 1184.8000000000009 286.6 Q1186.4000000000008 289.0 1188.000000000001 286.6" fill="none" stroke="#3a8ee6" stroke-width="1.1"/>
<path d="M1210 286.6 Q1211.6 284.20000000000005 1213.2 286.6 Q1214.8 289.0 1216.4 286.6 Q1218.0 284.20000000000005 1219.6000000000001 286.6 Q1221.2 289.0 1222.8000000000002 286.6 Q1224.4 284.20000000000005 1226.0000000000002 286.6 Q1227.6000000000001 289.0 1229.2000000000003 286.6 Q1230.8000000000002 284.20000000000005 1232.4000000000003 286.6 Q1234.0000000000002 289.0 1235.6000000000004 286.6 Q1237.2000000000003 284.20000000000005 1238.8000000000004 286.6 Q1240.4000000000003 289.0 1242.0000000000005 286.6 Q1243.6000000000004 284.20000000000005 1245.2000000000005 286.6 Q1246.8000000000004 289.0 1248.4000000000005 286.6 Q1250.0000000000005 284.20000000000005 1251.6000000000006 286.6 Q1253.2000000000005 289.0 1254.8000000000006 286.6 Q1256.4000000000005 284.20000000000005 1258.0000000000007 286.6 Q1259.6000000000006 289.0 1261.2000000000007 286.6 Q1262.8000000000006 284.20000000000005 1264.4000000000008 286.6 Q1266.0000000000007 289.0 1267.6000000000008 286.6 Q1269.2000000000007 284.20000000000005 1270.8000000000009 286.6 Q1272.4000000000008 289.0 1274.000000000001 286.6" fill="none" stroke="#3a8ee6" stroke-width="1.1"/>
<rect x="1797" y="120.8" width="106" height="2.4" fill="#264f78" opacity="0.75"/>
<rect x="1796.00" y="108.80" width="0.95" height="1.6" fill="#ffd700" opacity="0.5"/>
<rect x="1799.80" y="110.80" width="15.20" height="1.6" fill="#9cdcfe" opacity="0.5"/>
<rect x="1815.00" y="110.80" width="0.95" height="1.6" fill="#d4d4d4" opacity="0.5"/>
<rect x="1816.90" y="110.80" width="14.25" height="1.6" fill="#ce9178" opacity="0.5"/>
<rect x="1799.80" y="112.80" width="19.95" height="1.6" fill="#9cdcfe" opacity="0.5"/>
<rect x="1819.75" y="112.80" width="0.95" height="1.6" fill="#d4d4d4" opacity="0.5"/>
<rect x="1821.65" y="112.80" width="3.80" height="1.6" fill="#569cd6" opacity="0.5"/>
<rect x="1799.80" y="114.80" width="16.15" height="1.6" fill="#9cdcfe" opacity="0.5"/>
<rect x="1815.95" y="114.80" width="0.95" height="1.6" fill="#d4d4d4" opacity="0.5"/>
<rect x="1817.85" y="114.80" width="1.90" height="1.6" fill="#b5cea8" opacity="0.5"/>
<rect x="1799.80" y="116.80" width="38.00" height="1.6" fill="#9cdcfe" opacity="0.5"/>
<rect x="1837.80" y="116.80" width="0.95" height="1.6" fill="#d4d4d4" opacity="0.5"/>
<rect x="1839.70" y="116.80" width="5.70" height="1.6" fill="#ce9178" opacity="0.5"/>
<rect x="1799.80" y="118.80" width="29.45" height="1.6" fill="#9cdcfe" opacity="0.5"/>
<rect x="1829.25" y="118.80" width="0.95" height="1.6" fill="#d4d4d4" opacity="0.5"/>
<rect x="1831.15" y="118.80" width="30.40" height="1.6" fill="#ce9178" opacity="0.5"/>
<rect x="1796.00" y="122.80" width="0.95" height="1.6" fill="#ffd700" opacity="0.5"/>
<rect x="1903" y="109" width="1" height="941" fill="#3a3a3a"/>
<rect x="1904" y="109" width="16" height="770" fill="#424242"/>
<rect x="1904" y="255.5" width="16" height="1.5" fill="#a0a0a0"/>
<rect x="1915.8" y="231" width="4.2" height="24.5" fill="#4b8fe0"/>
<g fill="none" stroke="#cccccc" stroke-width="1.5" stroke-linejoin="round">
<path d="M1826 54 V50.6 H1830.8 L1835.8 55.6 V66.8 H1823.8 V61.5 M1830.8 50.6 V55.6 H1835.8"/>
<path d="M1820.5 60.6 A3.6 3.6 0 0 1 1823 54 H1826.4 M1824.4 51.8 L1826.6 54 L1824.4 56.2"/>
<rect x="1852.2" y="51.2" width="15" height="14.6" rx="1.5"/><line x1="1859.6" y1="51.2" x2="1859.6" y2="65.8"/>
</g>
<circle cx="1885" cy="59" r="1.4" fill="#cccccc"/>
<circle cx="1891.5" cy="59" r="1.4" fill="#cccccc"/>
<circle cx="1897.8" cy="59" r="1.4" fill="#cccccc"/>
<g fill="none" stroke="#ffffff" stroke-width="1.5" stroke-linecap="round" stroke-linejoin="round">
<circle cx="27.7" cy="1064" r="7.3"/><path d="M24.9 1061.2 L30.5 1066.8 M30.5 1061.2 L24.9 1066.8"/>
<path d="M61.3 1056.5 L69.2 1071 H53.6 Z"/><path d="M61.3 1061.3 V1066"/>
<circle cx="95.3" cy="1064" r="7.3"/><path d="M95.3 1062.8 V1068"/>
<path d="M1769.2 1057 L1776.4 1070.4 H1762 Z"/><path d="M1769.2 1061.6 V1065.8"/>
</g>
<circle cx="61.3" cy="1068.4" r="0.9" fill="#ffffff"/><circle cx="95.3" cy="1060.4" r="0.9" fill="#ffffff"/><circle cx="1769.2" cy="1068" r="0.9" fill="#ffffff"/>
<path d="M1578.5919999999999 1058 Q1575.1522 1058 1575.1522 1060.7 V1063.67 Q1575.1522 1064.75 1573.3 1064.75 Q1575.1522 1064.75 1575.1522 1065.83 V1068.8 Q1575.1522 1071.5 1578.5919999999999 1071.5 M1582.708 1058 Q1586.1478 1058 1586.1478 1060.7 V1063.67 Q1586.1478 1064.75 1588.0 1064.75 Q1586.1478 1064.75 1586.1478 1065.83 V1068.8 Q1586.1478 1071.5 1582.708 1071.5" fill="none" stroke="#ffffff" stroke-width="1.3" stroke-linecap="round"/>
<g fill="none" stroke="#ffffff" stroke-width="1.2" stroke-linejoin="round"><circle cx="1852.5" cy="1061.8" r="3.3"/><path d="M1847.2 1071 Q1848 1066.2 1852.5 1066.2 Q1855 1066.2 1856.4 1067.6"/><path d="M1855 1058.4 V1056 H1864 V1063 H1860 L1857.6 1065.2 V1063"/></g>
<g fill="none" stroke="#ffffff" stroke-width="1.3" stroke-linejoin="round"><path d="M1886 1068.6 H1900 Q1898 1066.8 1898 1063 V1062 A5 5 0 0 0 1888 1062 V1063 Q1888 1066.8 1886 1068.6Z"/><path d="M1891 1070.4 A2.1 2.1 0 0 0 1895 1070.4"/></g>
</svg>
</body></html>
